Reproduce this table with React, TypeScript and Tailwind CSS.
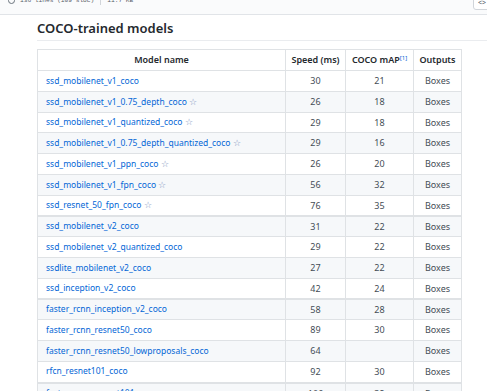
import React from "react";

type Row = { name: string; star?: boolean; speed: string; map: string; h: string; thick?: boolean };

const rows: Row[] = [
  { name: "ssd_mobilenet_v1_coco", speed: "30", map: "21", h: "h-[21px]" },
  { name: "ssd_mobilenet_v1_0.75_depth_coco", star: true, speed: "26", map: "18", h: "h-[21px]" },
  { name: "ssd_mobilenet_v1_quantized_coco", star: true, speed: "29", map: "18", h: "h-[20px]" },
  { name: "ssd_mobilenet_v1_0.75_depth_quantized_coco", star: true, speed: "29", map: "16", h: "h-[21px]" },
  { name: "ssd_mobilenet_v1_ppn_coco", star: true, speed: "26", map: "20", h: "h-[21px]" },
  { name: "ssd_mobilenet_v1_fpn_coco", star: true, speed: "56", map: "32", h: "h-[21px]" },
  { name: "ssd_resnet_50_fpn_coco", star: true, speed: "76", map: "35", h: "h-[20px]", thick: true },
  { name: "ssd_mobilenet_v2_coco", speed: "31", map: "22", h: "h-[21px]" },
  { name: "ssd_mobilenet_v2_quantized_coco", speed: "29", map: "22", h: "h-[21px]" },
  { name: "ssdlite_mobilenet_v2_coco", speed: "27", map: "22", h: "h-[21px]" },
  { name: "ssd_inception_v2_coco", speed: "42", map: "24", h: "h-[20px]", thick: true },
  { name: "faster_rcnn_inception_v2_coco", speed: "58", map: "28", h: "h-[21px]" },
  { name: "faster_rcnn_resnet50_coco", speed: "89", map: "30", h: "h-[21px]" },
  { name: "faster_rcnn_resnet50_lowproposals_coco", speed: "64", map: "", h: "h-[21px]" },
  { name: "rfcn_resnet101_coco", speed: "92", map: "30", h: "h-[21px]", thick: true },
  { name: "faster_rcnn_resnet101_coco", speed: "106", map: "32", h: "h-[21px]" },
  { name: "faster_rcnn_resnet101_lowproposals_coco", speed: "82", map: "", h: "h-[21px]" },
];

export default function App() {
  return (
    <div
      className="relative w-[487px] h-[391px] overflow-hidden bg-white text-[#24292e]"
      style={{ fontFamily: '"Noto Sans", "Open Sans", sans-serif' }}
    >
      {/* file info bar */}
      <div className="h-[15px] border-b border-[#e1e4e8] bg-[#fafbfc] flex items-start justify-between overflow-hidden">
        <div
          className="mt-[-4px] ml-[8px] flex items-center gap-[4px] text-[6.2px] leading-[8px] text-[#586069]"
          style={{ fontFamily: '"Liberation Mono", monospace' }}
        >
          <span className="inline-block w-[7px] h-[7px] rounded-full border border-[#6a737d]" />
          <span className="ml-[1px]">136 lines (109 sloc)</span>
          <span className="inline-block w-px h-[9px] bg-[#d1d5da] mx-[2px]" />
          <span>11.7 KB</span>
        </div>
        <div className="mt-[-6px] mr-[-20px] w-[34px] h-[16px] shrink-0 rounded-[3px] border border-[#d1d5da] bg-white flex items-end pl-[4px] pb-[1px] text-[7px] text-[#586069]">
          &lt;&gt;
        </div>
      </div>

      {/* content */}
      <div className="pl-[37px]">
        <div className="pt-[4px] pb-[3px] border-b border-[#eaecef]">
          <h2 className="text-[13px] leading-[18px] font-semibold">COCO-trained models</h2>
        </div>

        <table className="mt-[8px] border-collapse text-[9px] text-[#444d56]">
          <thead>
            <tr className="h-[21px] bg-white">
              <th className="w-[248px] border border-[#dfe2e5] font-semibold text-center text-[#24292e]">Model name</th>
              <th className="w-[60px] border border-[#dfe2e5] font-semibold text-center text-[#24292e]">Speed (ms)</th>
              <th className="w-[68px] border border-[#dfe2e5] font-semibold text-center text-[#24292e] whitespace-nowrap">
                COCO mAP<sup className="text-[6px] text-[#0366d6] font-normal">[1]</sup>
              </th>
              <th className="w-[48px] border border-[#dfe2e5] font-semibold text-center text-[#24292e]">Outputs</th>
            </tr>
          </thead>
          <tbody>
            {rows.map((r, i) => (
              <tr
                key={r.name}
                className={`${r.h} ${i % 2 === 1 ? "bg-[#f6f8fa]" : "bg-white"} ${r.thick ? "border-b-2 border-b-[#dfe2e5]" : ""}`}
              >
                <td className="border border-[#dfe2e5] pl-[8px] text-left whitespace-nowrap text-[8.5px]">
                  <span className="text-[#0366d6]">{r.name}</span>
                  {r.star ? <span className="text-[#7d93bd]"> ☆</span> : null}
                </td>
                <td className="border border-[#dfe2e5] text-center">{r.speed}</td>
                <td className="border border-[#dfe2e5] text-center">{r.map}</td>
                <td className="border border-[#dfe2e5] text-center">Boxes</td>
              </tr>
            ))}
          </tbody>
        </table>
      </div>
    </div>
  );
}
